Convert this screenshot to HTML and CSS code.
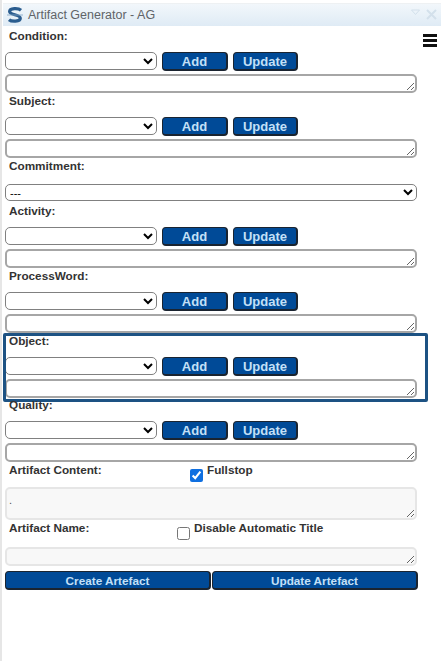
FILE: index.html
```html
<!DOCTYPE html>
<html lang="en">
<head>
  <meta charset="UTF-8" />
  <meta name="viewport" content="width=device-width, initial-scale=1.0" />
  <title>Artifact Generator - AG</title>
  <link rel="stylesheet" href="styles.css">
</head>
<body>
  <div class="window">
    <div class="titlebar">
      <svg class="logo" viewBox="0 0 16 16" aria-hidden="true">
        <path d="M14 3.200C11.500 1 2.600 .9 2.600 4.500 2.600 8.200 13.300 7.300 13.300 11.300 13.300 14.900 4.500 14.900 2 12.700" fill="none" stroke="#2b5d8f" stroke-width="3.200" />
        <path d="M0 8h16" stroke="#7fa3c4" stroke-width=".8" />
      </svg>
      <span class="titlebar-text">Artifact Generator - AG</span>
      <div class="titlebar-controls">
        <svg viewBox="0 0 26 12" aria-hidden="true">
          <path d="M.5 1h8l-4 4.500z" fill="none" stroke="#d3e0eb" />
          <path d="M16 1l9 9m0-9l-9 9" fill="none" stroke="#d3e0eb" stroke-width="2" />
        </svg>
      </div>
    </div>

    <div class="menu-icon"><span></span><span></span><span></span></div>

    <form class="form">
      <div class="field">
        <label class="field-label">Condition:</label>
        <div class="field-row">
          <select class="picker"><option></option></select>
          <button type="button" class="btn btn-add">Add</button>
          <button type="button" class="btn btn-update">Update</button>
        </div>
        <textarea class="text-box"></textarea>
      </div>

      <div class="field">
        <label class="field-label">Subject:</label>
        <div class="field-row">
          <select class="picker"><option></option></select>
          <button type="button" class="btn btn-add">Add</button>
          <button type="button" class="btn btn-update">Update</button>
        </div>
        <textarea class="text-box"></textarea>
      </div>

      <div class="field field-commitment">
        <label class="field-label">Commitment:</label>
        <select class="picker picker-wide"><option>---</option></select>
      </div>

      <div class="field">
        <label class="field-label">Activity:</label>
        <div class="field-row">
          <select class="picker"><option></option></select>
          <button type="button" class="btn btn-add">Add</button>
          <button type="button" class="btn btn-update">Update</button>
        </div>
        <textarea class="text-box"></textarea>
      </div>

      <div class="field">
        <label class="field-label">ProcessWord:</label>
        <div class="field-row">
          <select class="picker"><option></option></select>
          <button type="button" class="btn btn-add">Add</button>
          <button type="button" class="btn btn-update">Update</button>
        </div>
        <textarea class="text-box"></textarea>
      </div>

      <div class="field field-marked">
        <label class="field-label">Object:</label>
        <div class="field-row">
          <select class="picker"><option></option></select>
          <button type="button" class="btn btn-add">Add</button>
          <button type="button" class="btn btn-update">Update</button>
        </div>
        <textarea class="text-box"></textarea>
        <div class="marker"></div>
      </div>

      <div class="field">
        <label class="field-label">Quality:</label>
        <div class="field-row">
          <select class="picker"><option></option></select>
          <button type="button" class="btn btn-add">Add</button>
          <button type="button" class="btn btn-update">Update</button>
        </div>
        <textarea class="text-box"></textarea>
      </div>

      <div class="field-head">
        <label class="field-label head-label">Artifact Content:</label>
        <label class="check check-fullstop"><input type="checkbox" checked> <span>Fullstop</span></label>
      </div>
      <textarea class="text-box text-box-locked content-box" readonly>.</textarea>

      <div class="field-head">
        <label class="field-label head-label">Artifact Name:</label>
        <label class="check check-title"><input type="checkbox"> <span>Disable Automatic Title</span></label>
      </div>
      <textarea class="text-box text-box-locked" readonly></textarea>

      <div class="actions">
        <button type="button" class="btn btn-action">Create Artefact</button>
        <button type="button" class="btn btn-action">Update Artefact</button>
      </div>
    </form>
  </div>
</body>
</html>
```

FILE: styles.css
```css
:root {
  --btn-blue: #004a97;
  --btn-text: #c3e0f7;
  --label: #333;
  --marker: #1d5283;
}

* {
  box-sizing: border-box;
}

body {
  margin: 0;
  background: #fff;
  font-family: "Liberation Sans", Arial, sans-serif;
  color: var(--label);
  overflow: hidden;
}

.window {
  position: relative;
  height: 661px;
  padding-top: 3px;
  border-left: 2px solid #e6e6e6;
}

.titlebar {
  display: flex;
  align-items: center;
  height: 23px;
  margin-bottom: 1px;
  margin-left: 1px;
  margin-right: 2px;
  padding-left: 4px;
  background: linear-gradient(to bottom, #f2f7fb, #dfebf5);
  border-top: 1px solid #eef1f3;
}

.logo {
  width: 16px;
  height: 16px;
}

.titlebar-text {
  margin-left: 5px;
  font-size: 12.5px;
  color: #606468;
}

.titlebar-controls {
  margin-left: auto;
  margin-right: 4px;
  line-height: 0;
}

.titlebar-controls svg {
  width: 26px;
  height: 12px;
}

.menu-icon {
  position: absolute;
  top: 34px;
  left: 421px;
  width: 14px;
}

.menu-icon span {
  display: block;
  height: 3px;
  margin-bottom: 2px;
  background: #111;
}

.form {
  padding-left: 3px;
  padding-top: 1px;
  width: 418px;
}

.field {
  position: relative;
}

.field-marked {
  margin-bottom: -1px;
}

.field-label {
  display: block;
  height: 16px;
  margin-bottom: 8px;
  padding-left: 4px;
  font-size: 11.75px;
  font-weight: bold;
  line-height: 16px;
}

.field-row {
  display: flex;
  align-items: flex-start;
  height: 19px;
  margin-bottom: 3px;
}

.picker {
  width: 152px;
  height: 18px;
  background: #fff;
  border: 1px solid #808080;
  border-radius: 5px;
  font-family: inherit;
  font-size: 11px;
}

.picker-wide {
  display: block;
  width: 412px;
  height: 17px;
  margin-bottom: 2px;
}

.field-commitment .field-label {
  margin-bottom: 10px;
}

.btn {
  background: var(--btn-blue);
  border: 1px solid #1a2430;
  border-width: 1px 2px 2px 1px;
  border-radius: 4px;
  color: var(--btn-text);
  font-family: inherit;
  font-weight: bold;
  padding: 0;
}

.btn-add {
  width: 66px;
  height: 19px;
  margin-left: 5px;
  font-size: 13px;
}

.btn-update {
  width: 65px;
  height: 19px;
  margin-left: 5px;
  font-size: 13px;
}

.text-box {
  display: block;
  width: 412px;
  height: 19px;
  margin: 0;
  padding: 1px 2px;
  background: #fff;
  border: 2px solid #a6a6a6;
  border-radius: 5px;
  font-family: inherit;
  font-size: 11px;
  outline: none;
}

.text-box-locked {
  background: #f8f8f8;
  border-color: #e6e6e6;
  color: #555;
}

.content-box {
  height: 33px;
  padding-top: 5px;
}

.field-head {
  display: flex;
  height: 25px;
}

.head-label {
  width: 178px;
  margin: 0;
  padding-top: 0;
}

.check {
  display: flex;
  align-items: flex-start;
  font-size: 11.75px;
  font-weight: bold;
  line-height: 16px;
}

.check input {
  width: 13px;
  height: 13px;
  margin: 7px 4px 0 0;
  accent-color: #0f6fe0;
}

.check-fullstop {
  margin-left: 7px;
}

.check-title {
  margin-left: -6px;
}

.content-box + .field-head {
  height: 27px;
}

.actions {
  display: flex;
  width: 413px;
  gap: 1px;
  margin-top: 5px;
}

.btn-action {
  flex: 1;
  height: 19px;
  font-size: 11.75px;
}

.marker {
  position: absolute;
  top: 0;
  left: -2px;
  width: 425px;
  height: 69px;
  border: 3px solid var(--marker);
  border-radius: 2px;
  pointer-events: none;
}
```
